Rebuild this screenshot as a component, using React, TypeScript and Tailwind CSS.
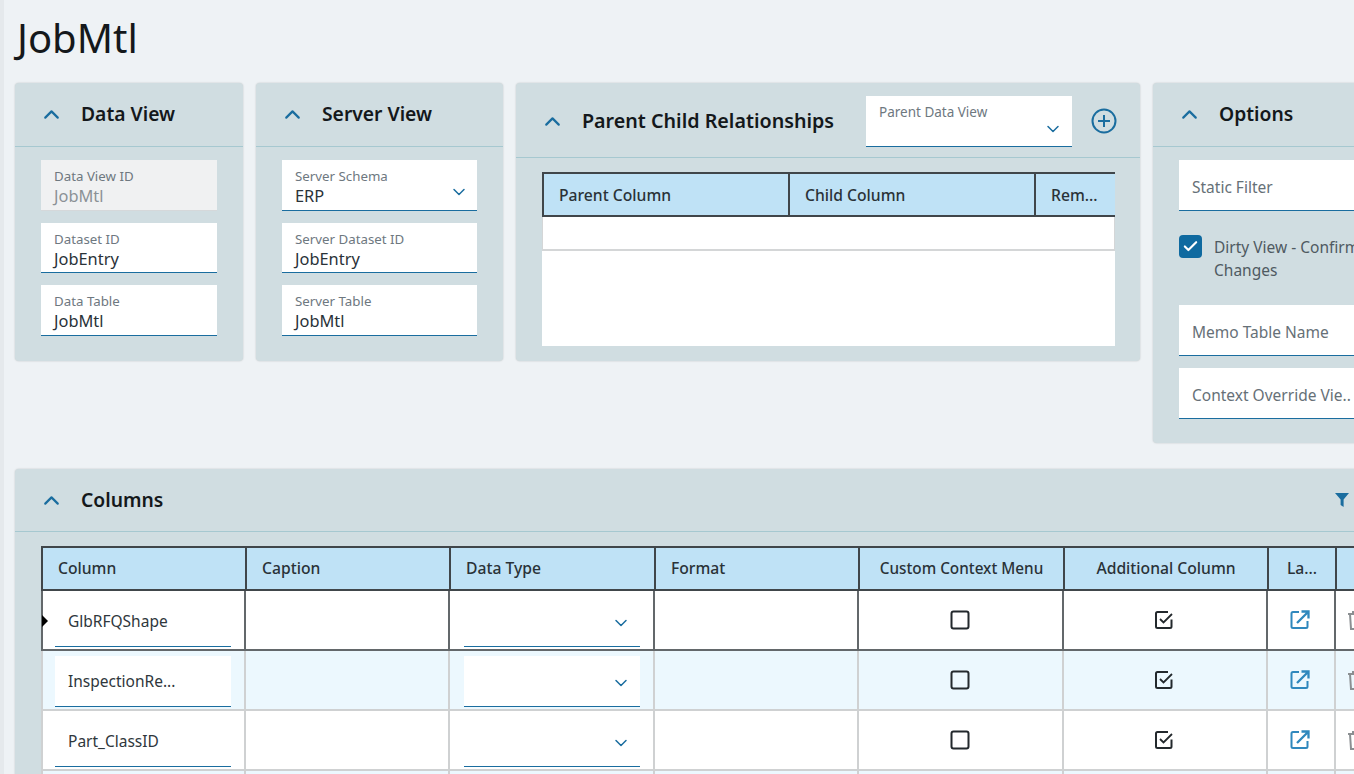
import { ChevronUp, ChevronDown, Check } from 'lucide-react';

function Collapse() {
  return <ChevronUp size={25} strokeWidth={2.1} className="text-[#1a6d9f] shrink-0" />;
}

function CardHeader({ title }: { title: string }) {
  return (
    <div className="flex items-center h-[64px] pt-[1px] pl-[24px] border-b border-[#a6c8d0]">
      <Collapse />
      <span className="ml-[17px] text-[19.3px] font-semibold text-[#14181b]">{title}</span>
    </div>
  );
}

function Field({ label, value, width, disabled, select }: {
  label: string; value?: string; width: string; disabled?: boolean; select?: boolean;
}) {
  return (
    <div
      className={`relative h-[50.5px] pl-[13px] pt-[7px] ${width} ${
        disabled ? 'bg-[#f0f1f2] border-b border-[#d5d8da]' : 'bg-white border-b-[1.5px] border-[#1a6d9f]'
      }`}
    >
      <div className="text-[13.3px] leading-[18px] text-[#6e787f]">{label}</div>
      <div className={`text-[16.4px] leading-[22px] ${disabled ? 'text-[#8b9196]' : 'text-[#2a3238]'}`}>{value}</div>
      {select && <ChevronDown size={20} strokeWidth={1.8} className="absolute right-[8px] top-[22px] text-[#1a6d9f]" />}
    </div>
  );
}

function PlaceholderField({ label }: { label: string }) {
  return (
    <div className="flex items-center h-[51px] w-[240px] pl-[13px] pt-[6px] bg-white border-b-[1.5px] border-[#1a6d9f]">
      <span className="text-[15.5px] text-[#667077]">{label}</span>
    </div>
  );
}

function ParentTable() {
  return (
    <div className="ml-[26px] mr-[25px] mt-[14px]">
      <div className="grid grid-cols-[246px_246px_81px] h-[45px] bg-[#bfe2f6] border-y-2 border-[#40464a] text-[15.7px] font-medium text-[#2a3238]">
        <div className="flex items-center pl-[15px] pt-[2px] border-l-2 border-[#40464a]">Parent Column</div>
        <div className="flex items-center pl-[15px] pt-[2px] border-l-2 border-[#40464a]">Child Column</div>
        <div className="flex items-center pl-[15px] pt-[2px] border-l-2 border-[#40464a]">Rem...</div>
      </div>
      <div className="h-[129px] bg-white">
        <div className="h-[34px] border-x border-b-2 border-[#d4d6d7]" />
      </div>
    </div>
  );
}

function CheckedIcon() {
  return (
    <svg width="20" height="20" viewBox="0 0 20 20" fill="none" stroke="#23292d" strokeWidth="2">
      <path d="M17.5 9.5V16.5a1.5 1.5 0 0 1-1.5 1.5H3.5A1.5 1.5 0 0 1 2 16.5V3.5A1.5 1.5 0 0 1 3.5 2H14" />
      <path d="M6 9l3.5 3.5L18 4" strokeWidth="1.8" />
    </svg>
  );
}

function EmptyIcon() {
  return (
    <svg width="20" height="20" viewBox="0 0 20 20" fill="none" stroke="#23292d" strokeWidth="2">
      <rect x="1.5" y="1.5" width="17" height="17" rx="2" />
    </svg>
  );
}

function LaunchIcon() {
  return (
    <svg width="20" height="20" viewBox="0 0 20 20" fill="none" stroke="#2f88bd" strokeWidth="2">
      <path d="M9 2H3a1.5 1.5 0 0 0-1.5 1.5v13A1.5 1.5 0 0 0 3 18h13a1.5 1.5 0 0 0 1.5-1.5V11" />
      <path d="M7 13L18 2M11.5 1.5h7v7" strokeWidth="2.3" />
    </svg>
  );
}

function TrashIcon() {
  return (
    <svg width="20" height="20" viewBox="0 0 20 20" fill="none" stroke="#8b8f92" strokeWidth="2">
      <path d="M2 4h16M7 4V2h6v2M4 4l1 15h10l1-15" />
    </svg>
  );
}

const HEADERS = ['Column', 'Caption', 'Data Type', 'Format'];

function ColumnsHeader() {
  return (
    <div className="grid grid-cols-[204px_204px_205px_204px_205px_204px_68px_200px] h-[45px] bg-[#bfe2f6] border-y-2 border-[#40464a] text-[15.7px] font-medium text-[#2a3238]">
      {HEADERS.map((h) => (
        <div key={h} className="flex items-center pl-[15px] pt-[2px] border-l-2 border-[#40464a]">{h}</div>
      ))}
      <div className="flex items-center justify-center pt-[1px] border-l-2 border-[#40464a]">
        <span className="text-[15.3px]">Custom Context Menu</span>
      </div>
      <div className="flex items-center justify-center pt-[2px] border-l-2 border-[#40464a]">Additional Column</div>
      <div className="flex items-center justify-center pt-[2px] border-l-2 border-[#40464a]">La...</div>
      <div className="border-l-2 border-[#40464a]" />
    </div>
  );
}

function Row({ name, selected, alt }: { name?: string; selected?: boolean; alt?: boolean }) {
  const line = selected ? 'border-[#63686b]' : 'border-[#cfd1d2]';
  const cell = `relative flex items-center h-full border-l-2 ${line}`;
  return (
    <div className={`grid grid-cols-[203px_204px_205px_204px_205px_204px_68px_200px] relative h-[60px] border-b-2 ${line} ${alt ? 'bg-[#ecf8fe]' : 'bg-white'}`}>
      <div className={`${cell} pl-[12px] pt-[4px]`}>
        {selected && (
          <span className="absolute left-[-1px] top-[24px] w-0 h-0 border-y-[6px] border-y-transparent border-l-[6px] border-l-black" />
        )}
        <div className="flex items-center w-[176px] h-[51px] pl-[13px] pt-[1px] bg-white border-b-[1.5px] border-[#1a6d9f] text-[15.5px] text-[#2f373c]">
          {name}
        </div>
      </div>
      <div className={cell} />
      <div className={`${cell} pl-[14px] pt-[4px]`}>
        <div className="relative w-[176px] h-[51px] bg-white border-b-[1.5px] border-[#1a6d9f]">
          <ChevronDown size={20} strokeWidth={1.8} className="absolute right-[9px] top-[17px] text-[#1a6d9f]" />
        </div>
      </div>
      <div className={cell} />
      <div className={`${cell} justify-center pr-[2px]`}><EmptyIcon /></div>
      <div className={`${cell} justify-center pr-[2px]`}><CheckedIcon /></div>
      <div className={`${cell} justify-center pr-[2px]`}><LaunchIcon /></div>
      <div className={`${cell} pl-[10px]`}><TrashIcon /></div>
    </div>
  );
}

export default function App() {
  return (
    <div className="h-screen overflow-hidden bg-[#eef2f5] border-l-4 border-[#e5e9ec] pl-[11px] font-['Noto_Sans',sans-serif]">
      <div className="h-[82.5px] pt-[12px] pl-[2px] text-[40px] leading-[52px] text-[#14181b]">JobMtl</div>

      <div className="flex items-start gap-[13px] w-max">
        {/* Data View */}
        <div className="w-[228px] h-[278px] bg-[#d0dde1] rounded-sm shadow-[0_0_2px_rgba(0,0,0,0.2)]">
          <CardHeader title="Data View" />
          <div className="flex flex-col gap-[12px] pl-[26px] pt-[13.5px]">
            <Field label="Data View ID" value="JobMtl" width="w-[176px]" disabled />
            <Field label="Dataset ID" value="JobEntry" width="w-[176px]" />
            <Field label="Data Table" value="JobMtl" width="w-[176px]" />
          </div>
        </div>

        {/* Server View */}
        <div className="w-[247px] h-[278px] bg-[#d0dde1] rounded-sm shadow-[0_0_2px_rgba(0,0,0,0.2)]">
          <CardHeader title="Server View" />
          <div className="flex flex-col gap-[12px] pl-[26px] pt-[13.5px]">
            <Field label="Server Schema" value="ERP" width="w-[195px]" select />
            <Field label="Server Dataset ID" value="JobEntry" width="w-[195px]" />
            <Field label="Server Table" value="JobMtl" width="w-[195px]" />
          </div>
        </div>

        {/* Parent Child Relationships */}
        <div className="w-[624px] h-[278px] bg-[#d0dde1] rounded-sm shadow-[0_0_2px_rgba(0,0,0,0.2)]">
          <div className="flex items-center h-[75.5px] pl-[24px] pt-[3px] border-b border-[#a6c8d0]">
            <Collapse />
            <span className="ml-[17px] w-[254px] whitespace-nowrap text-[19.7px] font-semibold text-[#14181b]">Parent Child Relationships</span>
            <div className="relative ml-[30px] w-[206px] h-[51px] pl-[13px] pt-[7px] bg-white border-b-[1.5px] border-[#1a6d9f]">
              <span className="block text-[13.5px] leading-[18px] text-[#6e787f]">Parent Data View</span>
              <ChevronDown size={20} strokeWidth={1.8} className="absolute right-[9px] top-[23px] text-[#1a6d9f]" />
            </div>
            <svg width="26" height="26" viewBox="0 0 26 26" fill="none" stroke="#1a6d9f" strokeWidth="2" className="ml-[19px]">
              <circle cx="13" cy="13" r="11.5" />
              <path d="M13 7v12M7 13h12" />
            </svg>
          </div>
          <ParentTable />
        </div>

        {/* Options */}
        <div className="w-[260px] h-[360px] bg-[#d0dde1] rounded-sm shadow-[0_0_2px_rgba(0,0,0,0.2)]">
          <CardHeader title="Options" />
          <div className="pl-[26px] pt-[13px]">
            <PlaceholderField label="Static Filter" />
            <div className="flex mt-[24px] h-[70px]">
              <div className="flex items-center justify-center w-[23px] h-[23px] rounded-sm bg-[#0f6aa0]">
                <Check size={17} strokeWidth={3} className="text-white" />
              </div>
              <div className="ml-[12px] w-[160px] pt-[1px] text-[15.5px] leading-[23px] text-[#4f5a61]">Dirty View - Confirm Changes</div>
            </div>
            <PlaceholderField label="Memo Table Name" />
            <div className="mt-[12px]"><PlaceholderField label="Context Override Vie.." /></div>
          </div>
        </div>
      </div>

      {/* Columns */}
      <div className="mt-[26px] w-[1500px] bg-[#d0dde1] rounded-sm shadow-[0_0_2px_rgba(0,0,0,0.2)]">
        <div className="flex items-center h-[63px] pl-[24px] pr-[166px] pt-[1px] border-b border-[#a6c8d0]">
          <Collapse />
          <span className="ml-[17px] text-[19.3px] font-semibold text-[#14181b]">Columns</span>
          <svg width="14" height="16" viewBox="0 0 14 16" fill="#1a6d9f" className="ml-auto">
            <path d="M0 1h14L8.6 7.6V15L5.6 13V7.6z" />
          </svg>
        </div>
        <div className="pl-[26px] pt-[14px]">
          <ColumnsHeader />
          <Row name="GlbRFQShape" selected />
          <Row name="InspectionRe..." alt />
          <Row name="Part_ClassID" />
          <Row alt />
        </div>
      </div>
    </div>
  );
}
